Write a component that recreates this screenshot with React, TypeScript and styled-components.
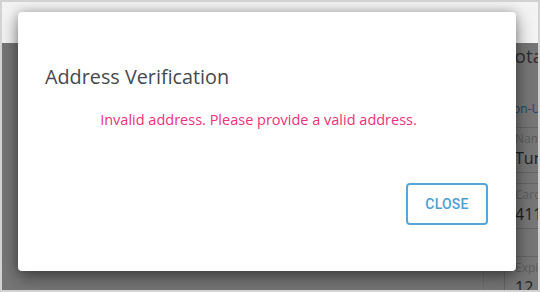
import React from 'react'
import styled, { createGlobalStyle } from 'styled-components'

const GlobalStyle = createGlobalStyle`
  * { box-sizing: border-box; }
  html, body { margin: 0; padding: 0; }
  body {
    width: 540px;
    height: 292px;
    overflow: hidden;
    font-family: "Open Sans", "Liberation Sans", sans-serif;
  }
`

const Frame = styled.div`
  position: relative;
  width: 540px;
  height: 292px;
  border: 2px solid #d2d2d2;
  display: flex;
  flex-direction: column;
  background: #777777;
  overflow: hidden;
`

const Header = styled.div`
  height: 41px;
  flex-shrink: 0;
  background: #f3f3f3;
`

const Main = styled.div`
  flex: 1;
  display: flex;
  background: #767676;
`

const Spacer = styled.div`
  flex: 1;
`

const Sidebar = styled.div`
  width: 55px;
  flex-shrink: 0;
  padding: 0 0 0 20px;
  border-left: 1px solid rgba(0, 0, 0, 0.08);
  display: flex;
  flex-direction: column;
  overflow: hidden;
  white-space: nowrap;
`

const SideTitle = styled.div`
  font-size: 19px;
  color: #2e2e2e;
  line-height: 26px;
`

const SideLink = styled.div`
  font-size: 12px;
  color: #1d4466;
  margin-top: 31px;
`

const Field = styled.div<{ $gap: number }>`
  border: 1px solid rgba(0, 0, 0, 0.14);
  border-right: none;
  padding: 3px 10px;
  height: 46px;
  margin-top: ${p => p.$gap}px;
`

const FieldLabel = styled.div`
  font-size: 12px;
  color: #5c5c5c;
  line-height: 16px;
`

const FieldValue = styled.div`
  font-size: 16px;
  color: #1e1e1e;
  line-height: 22px;
`

const Overlay = styled.div`
  position: absolute;
  inset: 0;
  padding: 10px 0 0 16px;
`

const Modal = styled.div`
  width: 498px;
  height: 259px;
  background: #ffffff;
  border-radius: 4px;
  box-shadow: 0 6px 18px rgba(0, 0, 0, 0.45), 0 0 10px rgba(0, 0, 0, 0.18);
  padding: 51px 28px 46px 27px;
  display: flex;
  flex-direction: column;
`

const Title = styled.h2`
  margin: 0;
  font-size: 19.8px;
  line-height: 27px;
  font-weight: 400;
  color: #45484d;
`

const Message = styled.p`
  margin: 20px 0 0 0;
  padding-right: 16px;
  font-size: 14.5px;
  line-height: 20px;
  text-align: center;
  color: #f0317a;
`

const Actions = styled.div`
  margin-top: auto;
  display: flex;
  justify-content: flex-end;
`

const CloseButton = styled.button`
  width: 82px;
  height: 42px;
  border: 2px solid #58a5d6;
  border-radius: 4px;
  background: #ffffff;
  color: #4f9fd3;
  font-family: Roboto, "Liberation Sans", sans-serif;
  font-weight: 500;
  font-size: 14px;
  letter-spacing: 0.2px;
  cursor: pointer;
`

function App() {
  return (
    <>
      <GlobalStyle />
      <Frame>
        <Header />
        <Main>
          <Spacer />
          <Sidebar>
            <SideTitle>Total</SideTitle>
            <SideLink>Non-US</SideLink>
            <Field $gap={10}>
              <FieldLabel>Name</FieldLabel>
              <FieldValue>Tuna</FieldValue>
            </Field>
            <Field $gap={10}>
              <FieldLabel>Card</FieldLabel>
              <FieldValue>4111</FieldValue>
            </Field>
            <Field $gap={27}>
              <FieldLabel>Expiry</FieldLabel>
              <FieldValue>12 / 24</FieldValue>
            </Field>
          </Sidebar>
        </Main>
        <Overlay>
          <Modal>
            <Title>Address Verification</Title>
            <Message>Invalid address. Please provide a valid address.</Message>
            <Actions>
              <CloseButton>CLOSE</CloseButton>
            </Actions>
          </Modal>
        </Overlay>
      </Frame>
    </>
  )
}

export default App
